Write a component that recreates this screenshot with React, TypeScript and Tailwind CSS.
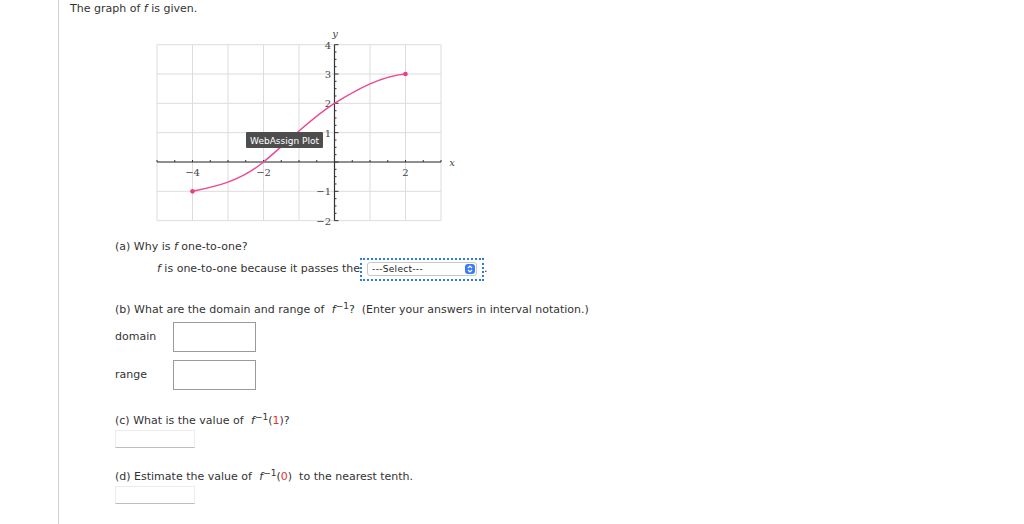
import React from 'react';

const font = { fontFamily: '"DejaVu Sans", Verdana, sans-serif' };

// page coords -> graph coords
const px = (x: number) => 334.5 + 35.5 * x;
const py = (y: number) => 162 - 29.33 * y;

const pts: [number, number, number][] = [
  [-4, -1, 0.25],
  [-2, 0, 1.0],
  [0, 2, 0.75],
  [2, 3, 0.1],
];

function curvePath() {
  let d = `M${px(pts[0][0])},${py(pts[0][1])}`;
  for (let i = 0; i < pts.length - 1; i++) {
    const [x0, y0, m0] = pts[i];
    const [x1, y1, m1] = pts[i + 1];
    const h = x1 - x0;
    d += ` C${px(x0 + h / 3)},${py(y0 + (m0 * h) / 3)} ${px(x1 - h / 3)},${py(y1 - (m1 * h) / 3)} ${px(x1)},${py(y1)}`;
  }
  return d;
}

const Graph: React.FC = () => {
  const xs = [-5, -4, -3, -2, -1, 0, 1, 2, 3];
  const ys = [-2, -1, 0, 1, 2, 3, 4];
  const halfX: number[] = [];
  for (let x = -5; x <= 3; x += 0.5) halfX.push(x);
  const halfY: number[] = [];
  for (let y = -2; y <= 4; y += 0.25) halfY.push(y);
  return (
    <svg width={320} height={200} viewBox="145 28 320 200" className="block ml-[75px] mt-[11px]">
      {/* grid */}
      {xs.map((x) => (
        <line key={'gx' + x} x1={px(x)} x2={px(x)} y1={py(4)} y2={py(-2)} stroke="#dcdcdc" strokeWidth={1} />
      ))}
      {ys.map((y) => (
        <line key={'gy' + y} x1={px(-5)} x2={px(3)} y1={py(y)} y2={py(y)} stroke="#dcdcdc" strokeWidth={1} />
      ))}
      {/* axes */}
      <line x1={px(-5)} x2={px(3)} y1={py(0)} y2={py(0)} stroke="#333" strokeWidth={1.2} />
      <line x1={px(0)} x2={px(0)} y1={py(4)} y2={py(-2)} stroke="#333" strokeWidth={1.2} />
      {halfX.map((x) => (
        <line key={'tx' + x} x1={px(x)} x2={px(x)} y1={py(0) - 2} y2={py(0)} stroke="#333" strokeWidth={1} />
      ))}
      {halfY.map((y) => (
        <line key={'ty' + y} x1={px(0)} x2={px(0) + (y % 1 === 0 ? 4 : 2)} y1={py(y)} y2={py(y)} stroke="#333" strokeWidth={1} />
      ))}
      {/* labels */}
      <g fontFamily='"DejaVu Serif", "Liberation Serif", serif' fontSize={10} fill="#444">
        <text x={335} y={37} fontStyle="italic" textAnchor="middle">y</text>
        <text x={452} y={166} fontStyle="italic" textAnchor="middle">x</text>
        <text x={331} y={49} textAnchor="end">4</text>
        <text x={331} y={78} textAnchor="end">3</text>
        <text x={331} y={107} textAnchor="end">2</text>
        <text x={331} y={137} textAnchor="end">1</text>
        <text x={331} y={195} textAnchor="end">−1</text>
        <text x={331} y={225} textAnchor="end">−2</text>
        <text x={px(-4)} y={176} textAnchor="middle">−4</text>
        <text x={px(-2)} y={176} textAnchor="middle">−2</text>
        <text x={px(2)} y={176} textAnchor="middle">2</text>
      </g>
      <path d={curvePath()} fill="none" stroke="#ec4a94" strokeWidth={1.5} />
      <circle cx={px(-4)} cy={py(-1)} r={2.3} fill="#ec3d8b" />
      <circle cx={px(2)} cy={py(3)} r={2.3} fill="#ec3d8b" />
      {/* tooltip */}
      <rect x={246} y={132} width={77} height={16} rx={1} fill="#4d4d4d" />
      <text x={284.5} y={143.5} textAnchor="middle" fontFamily='"DejaVu Sans", sans-serif' fontSize={9} fill="#fff">
        WebAssign Plot
      </text>
    </svg>
  );
};

const FInv: React.FC<{ arg?: string }> = ({ arg }) => (
  <>
    <i className="ml-[4px]">f</i>
    <sup className="text-[9px] relative -top-[4px] align-baseline">−1</sup>
    {arg !== undefined && (
      <>
        <span>(</span>
        <span className="text-[#e8312b]">{arg}</span>
        <span>)</span>
      </>
    )}
  </>
);

const App: React.FC = () => {
  return (
    <div className="w-[1024px] h-[524px] bg-white overflow-hidden text-[11px] text-[#333]" style={font}>
      <div className="ml-[58px] h-full border-l border-[#cfcfcf] pl-[11px]">
        <p className="pt-[1px] leading-[16px]">
          The graph of <i>f</i> is given.
        </p>
        <Graph />
        <div className="ml-[45px]">
          <p className="mt-[11px] leading-[16px]">
            (a) Why is <i>f</i> one-to-one?
          </p>
          <div className="mt-[2px] h-[24px] flex items-center ml-[42px]">
            <span>
              <i>f</i> is one-to-one because it passes the
            </span>
            <div className="border-2 border-dotted border-[#2d7be0] w-[124px] h-[23px] flex items-center justify-center">
              <div className="w-[110px] h-[14px] rounded-[3px] border border-[#c8c8c8] flex items-center justify-between pl-[4px] pr-[1px]">
                <span className="text-[9px] leading-none tracking-[0.3px] text-[#222]">---Select---</span>
                <span className="w-[10px] h-[10px] rounded-[3px] bg-[#3a7cf3] flex items-center justify-center">
                  <svg width="6" height="8" viewBox="0 0 6 8">
                    <path d="M1 3 L3 1 L5 3 M1 5 L3 7 L5 5" stroke="#fff" strokeWidth="1.2" fill="none" />
                  </svg>
                </span>
              </div>
            </div>
            <span>.</span>
          </div>
          <p className="mt-[21px] leading-[16px]">
            (b) What are the domain and range of <FInv />? &nbsp;(Enter your answers in interval notation.)
          </p>
          <div className="mt-[4px] flex items-center h-[30px]">
            <span className="w-[58px]">domain</span>
            <div className="w-[83px] h-[30px] border border-[#9a9a9a]" />
          </div>
          <div className="mt-[8px] flex items-center h-[30px]">
            <span className="w-[58px]">range</span>
            <div className="w-[83px] h-[30px] border border-[#9a9a9a]" />
          </div>
          <p className="mt-[23px] leading-[16px]">
            (c) What is the value of <FInv arg="1" />?
          </p>
          <div className="mt-[1px] w-[80px] h-[18px] border border-[#ececec] border-b-[#bdbdbd]" />
          <p className="mt-[21px] leading-[16px]">
            (d) Estimate the value of <FInv arg="0" />&nbsp; to the nearest tenth.
          </p>
          <div className="mt-[1px] w-[80px] h-[18px] border border-[#ececec] border-b-[#bdbdbd]" />
        </div>
      </div>
    </div>
  );
};

export default App;
